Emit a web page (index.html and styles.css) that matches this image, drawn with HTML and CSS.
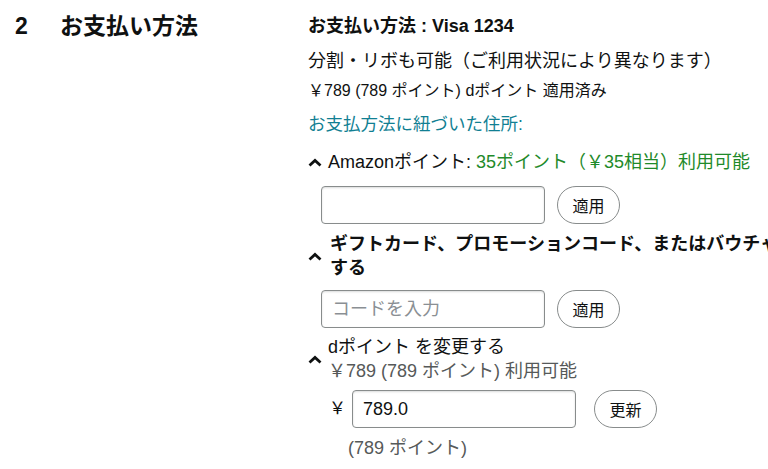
FILE: index.html
```html
<!DOCTYPE html>
<html lang="ja">

<head>
  <meta charset="UTF-8">
  <meta name="viewport" content="width=device-width, initial-scale=1.0">
  <title>お支払い方法</title>
  <link rel="stylesheet" href="styles.css">
</head>

<body>
  <div class="checkout">
    <div class="step-head">
      <span class="step-num">2</span><span class="step-title">お支払い方法</span>
    </div>

    <div class="pay">
      <div class="pay-title">お支払い方法 : Visa 1234</div>
      <div class="pay-line">分割・リボも可能（ご利用状況により異なります）</div>
      <div class="pay-small">￥789 (789 ポイント) dポイント 適用済み</div>
      <a class="pay-link" href="#">お支払方法に紐づいた住所:</a>

      <div class="expander">
        <svg class="chev" viewBox="0 0 14 9"><polyline points="1.5,7.5 7,2.5 12.5,7.5" /></svg>
        <div class="expander-text">Amazonポイント: <span class="ok">35ポイント（￥35相当）利用可能</span></div>
      </div>
      <div class="apply-row">
        <input class="field" type="text">
        <button class="pill">適用</button>
      </div>

      <div class="expander gift">
        <svg class="chev" viewBox="0 0 14 9"><polyline points="1.5,7.5 7,2.5 12.5,7.5" /></svg>
        <div class="expander-text bold">ギフトカード、プロモーションコード、またはバウチャーを適用<br>する</div>
      </div>
      <div class="apply-row">
        <input class="field" type="text" placeholder="コードを入力">
        <button class="pill">適用</button>
      </div>

      <div class="expander dpoint">
        <svg class="chev" viewBox="0 0 14 9"><polyline points="1.5,7.5 7,2.5 12.5,7.5" /></svg>
        <div class="expander-text">
          <div>dポイント を変更する</div>
          <div class="muted">￥789 (789 ポイント) 利用可能</div>
        </div>
      </div>
      <div class="yen-row">
        <span class="yen">￥</span>
        <input class="field" type="text" value="789.0">
        <button class="pill">更新</button>
      </div>
      <div class="muted points">(789 ポイント)</div>
    </div>
  </div>
</body>

</html>
```

FILE: styles.css
```css
body {
  margin: 0;
  font-family: "Liberation Sans", "Noto Sans CJK JP", sans-serif;
  color: #0f1111;
  overflow: hidden;
}

.checkout {
  display: flex;
  padding-top: 14px;
}

.step-head {
  width: 308px;
  flex-shrink: 0;
  font-size: 23px;
  font-weight: bold;
  line-height: 24px;
}

.step-num {
  display: inline-block;
  width: 45px;
  padding-left: 15px;
}

.pay {
  font-size: 18px;
  line-height: 24px;
  white-space: nowrap;
}

.pay-title {
  font-weight: bold;
  font-size: 18px;
}

.pay-line {
  margin-top: 11px;
}

.pay-small {
  margin-top: 8px;
  font-size: 16px;
  line-height: 20px;
}

.pay-link {
  display: block;
  margin-top: 11px;
  font-size: 17.5px;
  color: #117f93;
  text-decoration: none;
}

.expander {
  display: flex;
  align-items: center;
  margin-top: 14px;
}

.chev {
  width: 14px;
  height: 9px;
  flex-shrink: 0;
  margin-right: 6px;
}

.chev polyline {
  fill: none;
  stroke: #0f1111;
  stroke-width: 2.8;
}

.ok {
  color: #1f8a2a;
}

.bold {
  font-weight: bold;
}

.gift {
  margin-top: 8px;
}

.gift .chev {
  margin-right: 8px;
}

.dpoint {
  margin-top: 7px;
}

.muted {
  color: #565959;
}

.apply-row {
  display: flex;
  align-items: center;
  gap: 12px;
  margin-top: 12px;
  padding-left: 13px;
}

.gift + .apply-row {
  margin-top: 10px;
}

.field {
  box-sizing: border-box;
  width: 224px;
  height: 38px;
  padding: 0 10px;
  border: 1px solid #888c8c;
  border-radius: 4px;
  box-shadow: inset 0 1px 2px rgba(15, 17, 17, 0.15);
  font: inherit;
  color: #0f1111;
}

.field::placeholder {
  color: #8a8f94;
}

.pill {
  box-sizing: border-box;
  width: 63px;
  height: 38px;
  border: 1px solid #888c8c;
  border-radius: 19px;
  background: #fff;
  font-family: inherit;
  font-size: 16px;
  color: #0f1111;
}

.yen-row {
  display: flex;
  align-items: center;
  margin-top: 7px;
  padding-left: 21px;
}

.yen {
  width: 23px;
  font-size: 17px;
}

.yen-row .pill {
  margin-left: 18px;
}

.points {
  margin-top: 8px;
  padding-left: 40px;
}
```
